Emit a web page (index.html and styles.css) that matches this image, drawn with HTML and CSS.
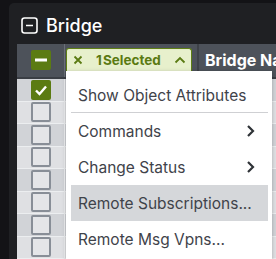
FILE: index.html
```html
<!DOCTYPE html>
<html>
<head>
<meta charset="utf-8">
<link rel="stylesheet" href="styles.css">
</head>
<body>
<div class="panel">
  <div class="title">
    <svg class="title-icon" width="17" height="17" viewBox="0 0 17 17"><rect x="1" y="1" width="15" height="15" rx="2.5" fill="none" stroke="#fff" stroke-width="1.6"/><line x1="5" y1="8.5" x2="12" y2="8.5" stroke="#fff" stroke-width="1.6"/></svg>
    <span>Bridge</span>
  </div>
  <div class="table">
    <div class="thead">
      <div class="col-check"><span class="cb cb-on"><svg width="20" height="20" viewBox="0 0 20 20"><line x1="4" y1="10" x2="16" y2="10" stroke="#fff" stroke-width="3"/></svg></span></div>
      <div class="col-sel">
        <div class="pill">
          <svg class="pill-x" width="10" height="10" viewBox="0 0 10 10"><path d="M1.5 1.5 L8.5 8.5 M8.5 1.5 L1.5 8.5" stroke="#5a7a12" stroke-width="1.8" fill="none"/></svg>
          <span class="pill-text">1&#8202;Selected</span>
          <svg class="pill-caret" width="12" height="8" viewBox="0 0 12 8"><path d="M1.5 6.5 L6 2 L10.5 6.5" stroke="#5a7a12" stroke-width="1.8" fill="none"/></svg>
        </div>
      </div>
      <div class="col-name">Bridge Name</div>
    </div>
    <div class="row odd"><div class="col-check"><span class="cb cb-on"><svg width="20" height="20" viewBox="0 0 20 20"><path d="M5 10.5 L8.5 14 L15 6.5" stroke="#fff" stroke-width="2.4" fill="none"/></svg></span></div><div class="cell"></div></div>
    <div class="row"><div class="col-check"><span class="cb"></span></div><div class="cell"></div></div>
    <div class="row odd"><div class="col-check"><span class="cb"></span></div><div class="cell"></div></div>
    <div class="row"><div class="col-check"><span class="cb"></span></div><div class="cell"></div></div>
    <div class="row odd"><div class="col-check"><span class="cb"></span></div><div class="cell"></div></div>
    <div class="row"><div class="col-check"><span class="cb"></span></div><div class="cell"></div></div>
    <div class="row odd"><div class="col-check"><span class="cb"></span></div><div class="cell"></div></div>
    <div class="row"><div class="col-check"><span class="cb"></span></div><div class="cell"></div></div>
  </div>
</div>
<div class="menu">
  <div class="item">Show Object Attributes</div>
  <div class="sep"></div>
  <div class="item">Commands<svg class="chev" width="9" height="14" viewBox="0 0 9 14"><path d="M2 2 L7 7 L2 12" stroke="#2f3337" stroke-width="2.2" fill="none"/></svg></div>
  <div class="item">Change Status<svg class="chev" width="9" height="14" viewBox="0 0 9 14"><path d="M2 2 L7 7 L2 12" stroke="#2f3337" stroke-width="2.2" fill="none"/></svg></div>
  <div class="item active">Remote Subscriptions...</div>
  <div class="item">Remote Msg Vpns...</div>
</div>
</body>
</html>
```
FILE: styles.css
```css
html, body {
  margin: 0;
  padding: 0;
  background: #131316;
  width: 276px;
  height: 259px;
  overflow: hidden;
  font-family: Inter, "Noto Sans", sans-serif;
}
.panel {
  margin: 3px 0 0 9px;
  height: 256px;
  background: #1f2023;
  border-top-left-radius: 5px;
  overflow: hidden;
}
.title {
  height: 41px;
  display: flex;
  align-items: center;
  padding-left: 12px;
  color: #fff;
  font-size: 18px;
  font-weight: 500;
  box-sizing: border-box;
  padding-top: 3px;
}
.title-icon {
  margin-right: 8px;
}
.table {
  margin-left: 8px;
}
.thead {
  height: 35px;
  display: flex;
  background: #4d525a;
  border-bottom: 2px solid #3a3e44;
  box-sizing: border-box;
}
.col-check {
  width: 47px;
  display: flex;
  align-items: center;
  justify-content: center;
  border-right: 1px solid #6a6f77;
  flex: none;
}
.thead .col-check {
  padding-bottom: 1px;
}
.col-sel {
  width: 131px;
  flex: none;
  display: flex;
  align-items: flex-start;
  padding-left: 1px;
  border-right: 2px solid #3e4248;
}
.pill {
  width: 126px;
  height: 23px;
  margin-top: 4px;
  box-sizing: border-box;
  background: #e7f0cc;
  border: 1.5px solid #5e7e14;
  border-bottom: none;
  border-radius: 3px 3px 0 0;
  display: flex;
  align-items: center;
  color: #5a7a12;
  font-weight: 700;
  font-size: 13.5px;
}
.pill-x {
  margin-left: 6px;
}
.pill-text {
  margin-left: 13px;
}
.pill-caret {
  margin-left: auto;
  margin-right: 5px;
}
.col-name {
  padding-left: 6px;
  display: flex;
  align-items: center;
  color: #fff;
  font-weight: 700;
  font-size: 16px;
  white-space: nowrap;
  padding-bottom: 1px;
}
.cb {
  width: 20px;
  height: 20px;
  box-sizing: border-box;
  border: 2px solid #888e97;
  border-radius: 2px;
  background: #e4e5e8;
  display: block;
}
.cb-on {
  background: #5b7b12;
  border: none;
}
.cb svg {
  display: block;
}
.row {
  height: 22.5px;
  display: flex;
  background: #dfe0e3;
  border-bottom: 1px solid #eceef0;
  box-sizing: border-box;
}
.row.odd {
  background: #d1d3d7;
}
.row .col-check {
  border-right: 1px solid #eef0f2;
}
.cell {
  flex: 1;
}
.menu {
  position: absolute;
  left: 66px;
  top: 71px;
  width: 206px;
  height: 200px;
  background: #fff;
  box-shadow: 0 1px 4px rgba(0,0,0,0.25);
  padding: 6px 4px 0 5px;
  box-sizing: border-box;
}
.item {
  height: 36px;
  display: flex;
  align-items: center;
  padding: 0 13px 0 7px;
  color: #3f434a;
  font-size: 15.5px;
  white-space: nowrap;
}
.item.active {
  background: #d5d7da;
}
.chev {
  margin-left: auto;
}
.sep {
  height: 1px;
  background: #cfd0d3;
  margin-top: -1px;
}
```
